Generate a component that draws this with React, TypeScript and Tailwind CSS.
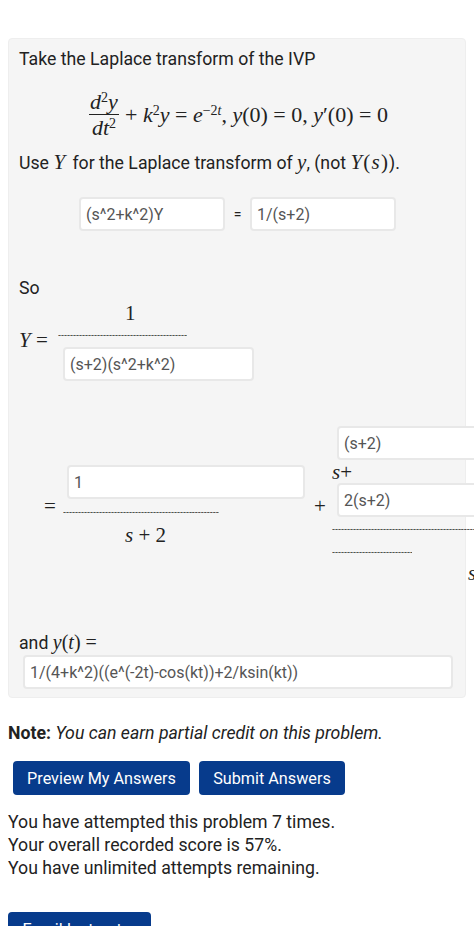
const mathFont = "font-['Liberation_Serif',serif]";

function Field({ value, className }: { value: string; className: string }) {
  return (
    <input
      readOnly
      value={value}
      className={`h-[34px] shrink-0 rounded border-2 border-[#e8e8e8] bg-white px-[5px] text-[16px] text-[#555] outline-none ${className}`}
    />
  );
}

function Dashes({ className }: { className: string }) {
  return (
    <div className={`h-[3px] shrink-0 overflow-hidden whitespace-nowrap text-[9px] font-medium leading-[3px] text-black ${className}`}>
      {"-".repeat(90)}
    </div>
  );
}

function I({ children }: { children: React.ReactNode }) {
  return <span className="italic">{children}</span>;
}

function Sup({ children }: { children: React.ReactNode }) {
  return <sup className="text-[14px] leading-none">{children}</sup>;
}

export default function App() {
  return (
    <div className="h-[926px] w-[474px] overflow-hidden bg-white font-['Roboto',sans-serif] text-[17.7px] leading-[23px] text-[#222]">
      <div className="mx-2 mt-[38px] h-[660px] rounded-sm border border-[#eeeeee] bg-[#f5f5f5] pl-[10px] pt-[9px]">
        <p>Take the Laplace transform of the IVP</p>

        <div className={`ml-[70px] mt-[15px] flex h-[56px] items-center text-[22px] whitespace-nowrap ${mathFont}`}>
          <div className="mr-[6px] flex w-[30px] shrink-0 flex-col items-center leading-[25px]">
            <span className="w-full border-b border-[#222] text-center">
              <I>d</I>
              <Sup>2</Sup>
              <I>y</I>
            </span>
            <span>
              <I>dt</I>
              <Sup>2</Sup>
            </span>
          </div>
          <span>
            + <I>k</I>
            <Sup>2</Sup>
            <I>y</I> = <I>e</I>
            <Sup>−2<I>t</I></Sup>, <I>y</I>(0) = 0, <I>y</I>′(0) = 0
          </span>
        </div>

        <p className="mt-[9px] h-[23px] whitespace-nowrap">
          Use <span className={`mr-[3px] text-[21px] italic ${mathFont}`}>Y</span> for the Laplace transform of{" "}
          <span className={`text-[21px] italic ${mathFont}`}>y</span>, (not{" "}
          <span className={`text-[21px] tracking-[1.2px] ${mathFont}`}>
            <I>Y</I>(<I>s</I>)
          </span>
          ).
        </p>

        <div className="ml-[60px] mt-[23px] flex items-center">
          <Field value="(s^2+k^2)Y" className="w-[146px]" />
          <span className="w-[25px] text-center text-[14px]">=</span>
          <Field value="1/(s+2)" className="w-[146px]" />
        </div>

        <p className="mt-[46px]">So</p>

        <div className={`flex h-[80px] items-center text-[21px] ${mathFont}`}>
          <span className="w-[39px] shrink-0 whitespace-nowrap">
            <I>Y</I> =
          </span>
          <div className="flex h-[80px] w-[197px] shrink-0 flex-col">
            <span className="ml-[67px] mt-[1px] h-[24px] leading-[24px]">1</span>
            <Dashes className="mt-[9px] w-[129px]" />
            <Field value="(s+2)(s^2+k^2)" className="ml-[5px] mt-[10px] w-[191px] font-['Roboto',sans-serif]" />
          </div>
        </div>

        <div className={`ml-[25px] mt-[46px] flex h-[160px] items-center text-[21px] ${mathFont}`}>
          <span className="w-[19px] shrink-0">=</span>
          <div className="flex w-[251px] shrink-0 flex-col">
            <Field value="1" className="ml-[4px] w-[238px] font-['Roboto',sans-serif]" />
            <Dashes className="mt-[12px] w-[156px]" />
            <span className="ml-[62px] mt-[9px] h-[24px] whitespace-nowrap leading-[24px]">
              <I>s</I> + 2
            </span>
          </div>
          <span className="w-[18px] shrink-0">+</span>
          <div className="flex h-[160px] w-[150px] shrink-0 flex-col">
            <Field value="(s+2)" className="ml-[5px] w-[160px] font-['Roboto',sans-serif]" />
            <span className="h-[23px] leading-[24px]">
              <I>s</I>+
            </span>
            <Field value="2(s+2)" className="ml-[5px] w-[160px] font-['Roboto',sans-serif]" />
            <Dashes className="mt-[11px] w-[150px]" />
            <Dashes className="mt-[20px] w-[80px]" />
            <span className="ml-[136px] mt-[7px] h-[24px] italic leading-[24px]">s</span>
          </div>
        </div>

        <p className="mt-[45px] whitespace-nowrap">
          and{" "}
          <span className={`text-[20px] ${mathFont}`}>
            <I>y</I>(<I>t</I>) =
          </span>
        </p>
        <Field value="1/(4+k^2)((e^(-2t)-cos(kt))+2/ksin(kt))" className="ml-[4px] w-[430px]" />
      </div>

      <p className="ml-2 mt-[24px]">
        <strong className="font-bold">Note:</strong> <em>You can earn partial credit on this problem.</em>
      </p>

      <div className="ml-[13px] mt-[16px] flex gap-[9px]">
        <button className="h-[34px] w-[177px] rounded bg-[#073b8c] text-[16.2px] text-white">Preview My Answers</button>
        <button className="h-[34px] w-[146px] rounded bg-[#073b8c] text-[16.2px] text-white">Submit Answers</button>
      </div>

      <div className="ml-2 mt-[16px]">
        <p>You have attempted this problem 7 times.</p>
        <p>Your overall recorded score is 57%.</p>
        <p>You have unlimited attempts remaining.</p>
      </div>

      <button className="ml-2 mt-[32px] h-[34px] w-[143px] rounded bg-[#073b8c] text-[16.2px] text-white">Email Instructor</button>
    </div>
  );
}
